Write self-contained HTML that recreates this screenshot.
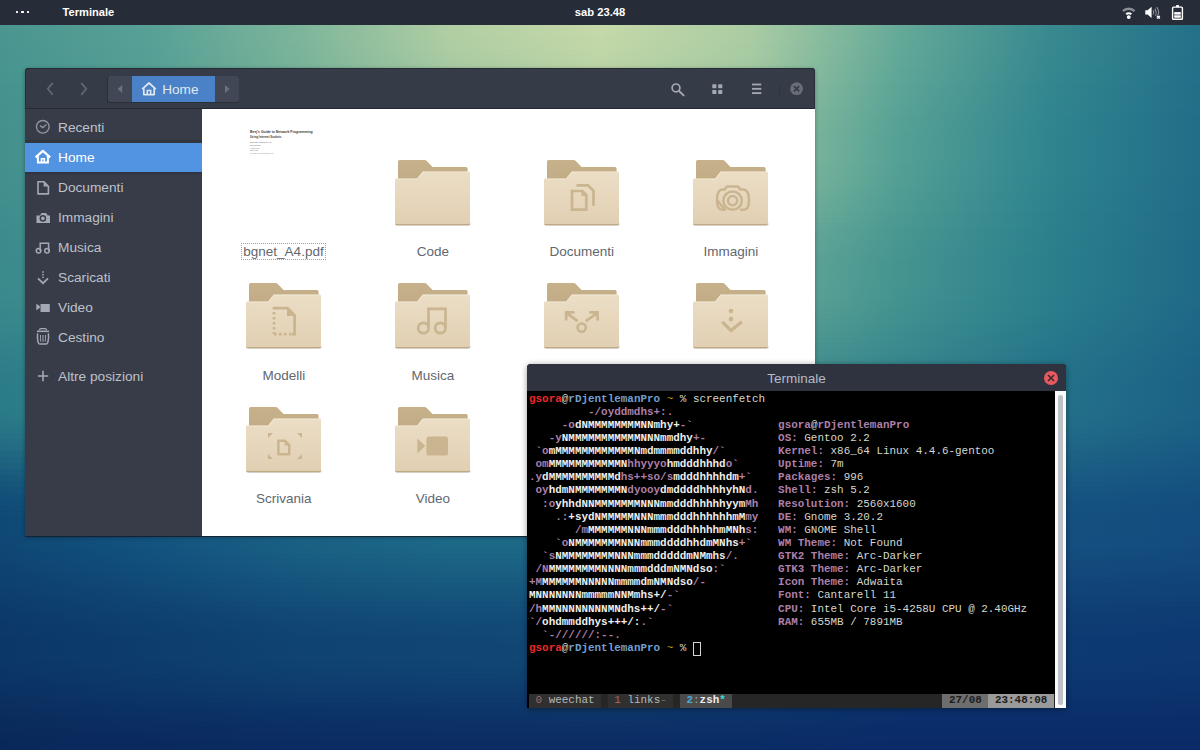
<!DOCTYPE html>
<html><head><meta charset="utf-8"><style>
html,body{margin:0;padding:0}
body{width:1200px;height:750px;overflow:hidden;position:relative;font-family:"Liberation Sans",sans-serif;background:#1a5a80}
.abs{position:absolute}
.bgb{position:absolute;left:0;width:1200px}
#topbar{position:absolute;left:0;top:0;width:1200px;height:25px;background:#262c38;color:#fff;font-weight:bold;font-size:11px}
#topbar .t{position:absolute;top:0;line-height:25px;white-space:nowrap}

/* nautilus */
#naut{position:absolute;left:25px;top:68px;width:790px;height:468px;background:#353945;border-radius:4px 4px 0 0;box-shadow:0 1px 4px rgba(0,0,0,0.35)}
#hb{position:absolute;left:0;top:0;width:790px;height:40px;background:#353a47;border-bottom:1px solid #23262e}
#side{position:absolute;left:0;top:41px;width:177px;height:427px;background:#383d49}
#view{position:absolute;left:177px;top:41px;width:613px;height:427px;background:#fff}
.si{position:absolute;left:33px;font-size:13.3px;color:#bcc2cc;white-space:nowrap}
.lbl{position:absolute;font-size:13.3px;color:#5c616c;white-space:nowrap;text-align:center;width:140px}

/* terminal */
#term{position:absolute;left:527px;top:364px;width:539px;height:344px;background:#000;border-radius:4px 4px 0 0;overflow:hidden;box-shadow:0 1px 6px rgba(0,0,0,0.4)}
#tt{position:absolute;left:0;top:0;width:539px;height:27px;background:#2f3340;color:#b5bac5;font-size:13.5px}
.ttl{position:absolute;left:0;width:539px;text-align:center;top:6.5px;line-height:16px}
#tc{position:absolute;left:2px;top:28.6px;width:527px;height:316px;font-family:"Liberation Mono",monospace;font-size:10.936px;font-weight:bold}
.tr{position:absolute;left:0;height:13.125px;line-height:13.125px;white-space:pre}
.n{font-weight:normal}
#sb{position:absolute;left:0;top:301.9px;width:527px;height:13.125px;background:#262626}
.seg{position:absolute;top:0;height:13.125px;line-height:13.125px;white-space:pre;font-weight:normal}
.tx{position:absolute;white-space:nowrap}

</style></head><body>
<div class="bgb" style="top:25px;height:6px;background:linear-gradient(90deg,#4a958f 0px,#57a096 150px,#7db59a 300px,#b0cea3 450px,#c5d8a8 600px,#aacca3 750px,#64a998 900px,#38898f 1050px,#237089 1200px)"></div>
<div class="bgb" style="top:31px;height:6px;background:linear-gradient(90deg,#4a958f 0px,#57a096 150px,#7db59a 300px,#b0cea3 450px,#c4d8a8 600px,#aacca3 750px,#64a998 900px,#38898f 1050px,#237089 1200px)"></div>
<div class="bgb" style="top:37px;height:6px;background:linear-gradient(90deg,#4a958f 0px,#57a096 150px,#7cb59a 300px,#afcda3 450px,#c3d7a8 600px,#a9cca3 750px,#63a998 900px,#38898f 1050px,#237089 1200px)"></div>
<div class="bgb" style="top:43px;height:6px;background:linear-gradient(90deg,#49958f 0px,#56a096 150px,#7cb49a 300px,#aecda3 450px,#c2d7a7 600px,#a8cba3 750px,#63a898 900px,#37898f 1050px,#237089 1200px)"></div>
<div class="bgb" style="top:49px;height:6px;background:linear-gradient(90deg,#49948f 0px,#569f96 150px,#7bb49a 300px,#accca2 450px,#c0d6a7 600px,#a7cba3 750px,#62a898 900px,#37888f 1050px,#237089 1200px)"></div>
<div class="bgb" style="top:55px;height:6px;background:linear-gradient(90deg,#49948f 0px,#559f95 150px,#7ab399 300px,#aacba2 450px,#bed5a7 600px,#a6caa2 750px,#61a797 900px,#36888f 1050px,#236f89 1200px)"></div>
<div class="bgb" style="top:61px;height:6px;background:linear-gradient(90deg,#48948f 0px,#559f95 150px,#79b399 300px,#a8caa2 450px,#bcd4a6 600px,#a4c9a2 750px,#60a797 900px,#36888f 1050px,#236f89 1200px)"></div>
<div class="bgb" style="top:67px;height:6px;background:linear-gradient(90deg,#48948f 0px,#549e95 150px,#77b299 300px,#a6c9a1 450px,#bad3a6 600px,#a3c9a2 750px,#5fa697 900px,#35888f 1050px,#226f89 1200px)"></div>
<div class="bgb" style="top:73px;height:6px;background:linear-gradient(90deg,#47938f 0px,#549e95 150px,#76b199 300px,#a4c8a1 450px,#b7d2a5 600px,#a1c8a2 750px,#5ea697 900px,#35878f 1050px,#226f89 1200px)"></div>
<div class="bgb" style="top:79px;height:6px;background:linear-gradient(90deg,#47938f 0px,#539d95 150px,#75b199 300px,#a2c7a0 450px,#b5d1a5 600px,#a0c7a1 750px,#5da597 900px,#34878f 1050px,#226f89 1200px)"></div>
<div class="bgb" style="top:85px;height:6px;background:linear-gradient(90deg,#46928e 0px,#529d94 150px,#73b098 300px,#9fc6a0 450px,#b2cfa4 600px,#9ec6a1 750px,#5ca496 900px,#33868f 1050px,#226e88 1200px)"></div>
<div class="bgb" style="top:91px;height:6px;background:linear-gradient(90deg,#46928e 0px,#529d94 150px,#72af98 300px,#9dc5a0 450px,#afcea3 600px,#9cc6a1 750px,#5ba496 900px,#33868f 1050px,#226e88 1200px)"></div>
<div class="bgb" style="top:97px;height:6px;background:linear-gradient(90deg,#45928e 0px,#519c94 150px,#71af98 300px,#9bc49f 450px,#accda3 600px,#9ac5a0 750px,#5aa396 900px,#32868f 1050px,#226e88 1200px)"></div>
<div class="bgb" style="top:103px;height:6px;background:linear-gradient(90deg,#45918e 0px,#519c94 150px,#6fae98 300px,#98c39f 450px,#aacca2 600px,#99c4a0 750px,#59a396 900px,#32858f 1050px,#226e88 1200px)"></div>
<div class="bgb" style="top:109px;height:6px;background:linear-gradient(90deg,#45918e 0px,#509b94 150px,#6ead98 300px,#96c29e 450px,#a7cba2 600px,#97c3a0 750px,#58a296 900px,#31858f 1050px,#216e88 1200px)"></div>
<div class="bgb" style="top:115px;height:6px;background:linear-gradient(90deg,#44918e 0px,#4f9b93 150px,#6dad97 300px,#94c19e 450px,#a5caa1 600px,#96c3a0 750px,#57a195 900px,#30858f 1050px,#216d88 1200px)"></div>
<div class="bgb" style="top:121px;height:6px;background:linear-gradient(90deg,#44918e 0px,#4f9b93 150px,#6cac97 300px,#93c09e 450px,#a3c9a1 600px,#95c29f 750px,#56a195 900px,#30858f 1050px,#216d88 1200px)"></div>
<div class="bgb" style="top:127px;height:6px;background:linear-gradient(90deg,#43908e 0px,#4f9a93 150px,#6bac97 300px,#91bf9d 450px,#a2c8a1 600px,#94c29f 750px,#55a195 900px,#30848f 1050px,#216d88 1200px)"></div>
<div class="bgb" style="top:133px;height:6px;background:linear-gradient(90deg,#43908e 0px,#4e9a93 150px,#6bab97 300px,#90bf9d 450px,#a0c8a0 600px,#93c19f 750px,#55a095 900px,#2f848f 1050px,#216d88 1200px)"></div>
<div class="bgb" style="top:139px;height:6px;background:linear-gradient(90deg,#43908e 0px,#4e9a93 150px,#6aab97 300px,#8fbe9d 450px,#9fc7a0 600px,#92c19f 750px,#54a095 900px,#2f848f 1050px,#216d88 1200px)"></div>
<div class="bgb" style="top:145px;height:6px;background:linear-gradient(90deg,#43908e 0px,#4e9a93 150px,#6aab97 300px,#8fbe9d 450px,#9fc7a0 600px,#92c19f 750px,#54a095 900px,#2f848f 1050px,#216d88 1200px)"></div>
<div class="bgb" style="top:151px;height:6px;background:linear-gradient(90deg,#43908e 0px,#4e9a93 150px,#6aab97 300px,#8fbe9d 450px,#9fc7a0 600px,#92c19f 750px,#54a095 900px,#2f848f 1050px,#216d88 1200px)"></div>
<div class="bgb" style="top:157px;height:6px;background:linear-gradient(90deg,#43908e 0px,#4e9a93 150px,#6aab97 300px,#8ebe9d 450px,#9ec7a0 600px,#91c19f 750px,#54a095 900px,#2f848f 1050px,#216d88 1200px)"></div>
<div class="bgb" style="top:163px;height:6px;background:linear-gradient(90deg,#43908e 0px,#4e9a93 150px,#69aa97 300px,#8dbd9d 450px,#9dc6a0 600px,#90c09f 750px,#539f95 900px,#2f848f 1050px,#216d88 1200px)"></div>
<div class="bgb" style="top:169px;height:6px;background:linear-gradient(90deg,#42908e 0px,#4d9993 150px,#68aa97 300px,#8cbc9c 450px,#9bc59f 600px,#8fbf9e 750px,#539f95 900px,#2f848f 1050px,#216d88 1200px)"></div>
<div class="bgb" style="top:175px;height:6px;background:linear-gradient(90deg,#428f8e 0px,#4d9993 150px,#67a996 300px,#8abb9c 450px,#99c49f 600px,#8dbe9e 750px,#529e94 900px,#2e838f 1050px,#216d88 1200px)"></div>
<div class="bgb" style="top:181px;height:6px;background:linear-gradient(90deg,#428f8e 0px,#4c9992 150px,#66a896 300px,#88ba9c 450px,#96c29e 600px,#8bbd9e 750px,#519e94 900px,#2e838e 1050px,#216c88 1200px)"></div>
<div class="bgb" style="top:187px;height:6px;background:linear-gradient(90deg,#418f8e 0px,#4c9892 150px,#65a896 300px,#86b99b 450px,#93c09e 600px,#89bc9d 750px,#509d94 900px,#2e838e 1050px,#216c88 1200px)"></div>
<div class="bgb" style="top:193px;height:6px;background:linear-gradient(90deg,#418e8d 0px,#4b9892 150px,#64a796 300px,#83b79b 450px,#90bf9d 600px,#86ba9d 750px,#4f9c93 900px,#2e828e 1050px,#206c88 1200px)"></div>
<div class="bgb" style="top:199px;height:6px;background:linear-gradient(90deg,#408e8d 0px,#4a9792 150px,#62a695 300px,#80b69a 450px,#8dbd9d 600px,#84b99c 750px,#4e9b93 900px,#2d828e 1050px,#206c88 1200px)"></div>
<div class="bgb" style="top:205px;height:6px;background:linear-gradient(90deg,#3f8d8d 0px,#4a9692 150px,#61a595 300px,#7eb49a 450px,#8abb9c 600px,#81b79c 750px,#4d9b93 900px,#2d828e 1050px,#206c88 1200px)"></div>
<div class="bgb" style="top:211px;height:6px;background:linear-gradient(90deg,#3f8d8d 0px,#499691 150px,#5fa495 300px,#7bb399 450px,#86b99b 600px,#7eb69b 750px,#4c9a92 900px,#2d818d 1050px,#206b87 1200px)"></div>
<div class="bgb" style="top:217px;height:6px;background:linear-gradient(90deg,#3e8c8d 0px,#489591 150px,#5ea395 300px,#78b199 450px,#83b79b 600px,#7cb49b 750px,#4b9992 900px,#2d818d 1050px,#206b87 1200px)"></div>
<div class="bgb" style="top:223px;height:6px;background:linear-gradient(90deg,#3e8c8d 0px,#479591 150px,#5ca294 300px,#75af98 450px,#7fb59a 600px,#79b29a 750px,#499892 900px,#2c818d 1050px,#206b87 1200px)"></div>
<div class="bgb" style="top:229px;height:6px;background:linear-gradient(90deg,#3d8c8d 0px,#479491 150px,#5ba194 300px,#73ae98 450px,#7cb399 600px,#76b19a 750px,#489791 900px,#2c808d 1050px,#206b87 1200px)"></div>
<div class="bgb" style="top:235px;height:6px;background:linear-gradient(90deg,#3d8b8c 0px,#469491 150px,#59a094 300px,#70ad97 450px,#79b299 600px,#74b099 750px,#479791 900px,#2c808d 1050px,#1f6b87 1200px)"></div>
<div class="bgb" style="top:241px;height:6px;background:linear-gradient(90deg,#3c8b8c 0px,#469390 150px,#589f94 300px,#6eab97 450px,#76b098 600px,#72ae99 750px,#469691 900px,#2c808c 1050px,#1f6a87 1200px)"></div>
<div class="bgb" style="top:247px;height:6px;background:linear-gradient(90deg,#3c8b8c 0px,#459390 150px,#579e93 300px,#6caa97 450px,#74af98 600px,#70ad99 750px,#469591 900px,#2b808c 1050px,#1f6a87 1200px)"></div>
<div class="bgb" style="top:253px;height:6px;background:linear-gradient(90deg,#3b8a8c 0px,#459290 150px,#569e93 300px,#6aa996 450px,#72ae98 600px,#6eac98 750px,#459590 900px,#2b7f8c 1050px,#1f6a87 1200px)"></div>
<div class="bgb" style="top:259px;height:6px;background:linear-gradient(90deg,#3b8a8c 0px,#449290 150px,#569d93 300px,#69a996 450px,#70ad97 600px,#6dac98 750px,#449490 900px,#2b7f8c 1050px,#1f6a87 1200px)"></div>
<div class="bgb" style="top:265px;height:6px;background:linear-gradient(90deg,#3b8a8c 0px,#449290 150px,#559d93 300px,#68a896 450px,#6fac97 600px,#6cab98 750px,#449490 900px,#2b7f8c 1050px,#1f6a87 1200px)"></div>
<div class="bgb" style="top:271px;height:6px;background:linear-gradient(90deg,#3b8a8c 0px,#449290 150px,#559d93 300px,#68a896 450px,#6fac97 600px,#6cab98 750px,#449490 900px,#2b7f8c 1050px,#1f6a87 1200px)"></div>
<div class="bgb" style="top:277px;height:6px;background:linear-gradient(90deg,#3b8a8c 0px,#449290 150px,#559d93 300px,#68a896 450px,#6fac97 600px,#6cab98 750px,#449490 900px,#2b7f8c 1050px,#1f6a87 1200px)"></div>
<div class="bgb" style="top:283px;height:6px;background:linear-gradient(90deg,#3b8a8c 0px,#449290 150px,#549d93 300px,#67a796 450px,#6eab97 600px,#6baa98 750px,#449490 900px,#2b7f8c 1050px,#1f6a87 1200px)"></div>
<div class="bgb" style="top:289px;height:6px;background:linear-gradient(90deg,#3a898c 0px,#439190 150px,#549c93 300px,#66a796 450px,#6daa96 600px,#6aaa97 750px,#439390 900px,#2b7e8c 1050px,#1f6a87 1200px)"></div>
<div class="bgb" style="top:295px;height:6px;background:linear-gradient(90deg,#3a898c 0px,#42908f 150px,#539b92 300px,#64a595 450px,#6ba996 600px,#69a997 750px,#429390 900px,#2a7e8c 1050px,#1f6987 1200px)"></div>
<div class="bgb" style="top:301px;height:6px;background:linear-gradient(90deg,#39888c 0px,#41908f 150px,#519a92 300px,#62a495 450px,#68a796 600px,#67a797 750px,#42928f 900px,#2a7d8c 1050px,#1e6987 1200px)"></div>
<div class="bgb" style="top:307px;height:6px;background:linear-gradient(90deg,#38878b 0px,#408f8f 150px,#509992 300px,#60a294 450px,#66a695 600px,#65a696 750px,#41918f 900px,#2a7d8c 1050px,#1e6887 1200px)"></div>
<div class="bgb" style="top:313px;height:6px;background:linear-gradient(90deg,#37868b 0px,#3f8d8e 150px,#4e9891 300px,#5ea194 450px,#63a494 600px,#62a495 750px,#40908f 900px,#297c8b 1050px,#1e6887 1200px)"></div>
<div class="bgb" style="top:319px;height:6px;background:linear-gradient(90deg,#36868b 0px,#3e8c8e 150px,#4c9691 300px,#5b9f93 450px,#60a294 600px,#60a295 750px,#3f8f8f 900px,#297b8b 1050px,#1e6787 1200px)"></div>
<div class="bgb" style="top:325px;height:6px;background:linear-gradient(90deg,#35858b 0px,#3c8b8e 150px,#4b9590 300px,#589d93 450px,#5c9f93 600px,#5da194 750px,#3d8e8e 900px,#287a8b 1050px,#1d6787 1200px)"></div>
<div class="bgb" style="top:331px;height:6px;background:linear-gradient(90deg,#34848b 0px,#3b8a8d 150px,#499390 300px,#559b92 450px,#599d92 600px,#5b9f93 750px,#3c8d8e 900px,#28798b 1050px,#1d6687 1200px)"></div>
<div class="bgb" style="top:337px;height:6px;background:linear-gradient(90deg,#33838a 0px,#39888d 150px,#47928f 300px,#529991 450px,#569b92 600px,#589d93 750px,#3b8c8e 900px,#27788b 1050px,#1d6686 1200px)"></div>
<div class="bgb" style="top:343px;height:6px;background:linear-gradient(90deg,#31828a 0px,#38878c 150px,#45908f 300px,#4f9791 450px,#529891 600px,#559b92 750px,#3a8a8e 900px,#27778b 1050px,#1d6586 1200px)"></div>
<div class="bgb" style="top:349px;height:6px;background:linear-gradient(90deg,#30818a 0px,#37868c 150px,#438f8e 300px,#4c9590 450px,#4f9690 600px,#539991 750px,#39898d 900px,#26768b 1050px,#1c6586 1200px)"></div>
<div class="bgb" style="top:355px;height:6px;background:linear-gradient(90deg,#2f808a 0px,#35858c 150px,#418e8e 300px,#4a938f 450px,#4c9490 600px,#509791 750px,#37888d 900px,#26758b 1050px,#1c6486 1200px)"></div>
<div class="bgb" style="top:361px;height:6px;background:linear-gradient(90deg,#2e7f8a 0px,#34848b 150px,#3f8c8d 300px,#47918f 450px,#49928f 600px,#4e9590 750px,#36878d 900px,#25758a 1050px,#1c6486 1200px)"></div>
<div class="bgb" style="top:367px;height:6px;background:linear-gradient(90deg,#2d7e89 0px,#33838b 150px,#3e8b8d 300px,#458f8e 450px,#46908e 600px,#4c948f 750px,#35868d 900px,#25748a 1050px,#1c6386 1200px)"></div>
<div class="bgb" style="top:373px;height:6px;background:linear-gradient(90deg,#2d7d89 0px,#32828b 150px,#3d8a8d 300px,#438e8e 450px,#448e8e 600px,#4a938f 750px,#35868c 900px,#25738a 1050px,#1b6386 1200px)"></div>
<div class="bgb" style="top:379px;height:6px;background:linear-gradient(90deg,#2c7d89 0px,#31818a 150px,#3c898c 300px,#418d8e 450px,#428d8e 600px,#48928f 750px,#34858c 900px,#24738a 1050px,#1b6286 1200px)"></div>
<div class="bgb" style="top:385px;height:6px;background:linear-gradient(90deg,#2b7c89 0px,#31808a 150px,#3b898c 300px,#408c8d 450px,#408c8d 600px,#47918e 750px,#33848c 900px,#24728a 1050px,#1b6286 1200px)"></div>
<div class="bgb" style="top:391px;height:6px;background:linear-gradient(90deg,#2b7c89 0px,#30808a 150px,#3a888c 300px,#3f8b8d 450px,#3f8b8d 600px,#46908e 750px,#33848c 900px,#24728a 1050px,#1b6286 1200px)"></div>
<div class="bgb" style="top:397px;height:6px;background:linear-gradient(90deg,#2b7c89 0px,#30808a 150px,#3a888c 300px,#3f8b8d 450px,#3f8b8d 600px,#46908e 750px,#33848c 900px,#24728a 1050px,#1b6286 1200px)"></div>
<div class="bgb" style="top:403px;height:6px;background:linear-gradient(90deg,#2b7c89 0px,#30808a 150px,#3a888c 300px,#3f8b8d 450px,#3f8b8d 600px,#46908e 750px,#33848c 900px,#24728a 1050px,#1b6286 1200px)"></div>
<div class="bgb" style="top:409px;height:6px;background:linear-gradient(90deg,#2a7b88 0px,#2f7f8a 150px,#39878c 300px,#3e8a8d 450px,#3e8a8d 600px,#458f8e 750px,#32838c 900px,#24718a 1050px,#1b6186 1200px)"></div>
<div class="bgb" style="top:415px;height:6px;background:linear-gradient(90deg,#297988 0px,#2e7e89 150px,#38868c 300px,#3d898d 450px,#3d898d 600px,#448e8d 750px,#31818b 900px,#237089 1050px,#1b6186 1200px)"></div>
<div class="bgb" style="top:421px;height:6px;background:linear-gradient(90deg,#287787 0px,#2d7c89 150px,#37848b 300px,#3c888d 450px,#3c888d 600px,#428c8d 750px,#307f8b 900px,#236f89 1050px,#1a6085 1200px)"></div>
<div class="bgb" style="top:427px;height:6px;background:linear-gradient(90deg,#277486 0px,#2c7a89 150px,#35828b 300px,#3a868c 450px,#3a868c 600px,#408a8d 750px,#2f7d8a 900px,#226d89 1050px,#1a5f85 1200px)"></div>
<div class="bgb" style="top:433px;height:6px;background:linear-gradient(90deg,#257285 0px,#2a7788 150px,#34808b 300px,#38848c 450px,#38848c 600px,#3e878c 750px,#2d7a89 900px,#216b88 1050px,#195e84 1200px)"></div>
<div class="bgb" style="top:439px;height:6px;background:linear-gradient(90deg,#246e84 0px,#287487 150px,#327e8a 300px,#36828c 450px,#36828c 600px,#3b858c 750px,#2b7788 900px,#206987 1050px,#195c84 1200px)"></div>
<div class="bgb" style="top:445px;height:6px;background:linear-gradient(90deg,#226b82 0px,#267287 150px,#2f7b8a 300px,#34808b 450px,#34808b 600px,#38828b 750px,#297487 900px,#1f6787 1050px,#185b83 1200px)"></div>
<div class="bgb" style="top:451px;height:6px;background:linear-gradient(90deg,#206781 0px,#246e86 150px,#2d7989 300px,#317e8b 450px,#317e8b 600px,#357f8a 750px,#277086 900px,#1e6486 1050px,#185983 1200px)"></div>
<div class="bgb" style="top:457px;height:6px;background:linear-gradient(90deg,#1e6480 0px,#226b85 150px,#2b7689 300px,#2f7b8b 450px,#2f7b8b 600px,#327c8a 750px,#256c85 900px,#1d6285 1050px,#175882 1200px)"></div>
<div class="bgb" style="top:463px;height:6px;background:linear-gradient(90deg,#1c607e 0px,#206885 150px,#297388 300px,#2d798a 450px,#2d798a 600px,#2f7989 750px,#236984 900px,#1c6085 1050px,#175682 1200px)"></div>
<div class="bgb" style="top:469px;height:6px;background:linear-gradient(90deg,#1a5c7d 0px,#1e6584 150px,#267188 300px,#2a778a 450px,#2a778a 600px,#2c7688 750px,#216583 900px,#1b5d84 1050px,#165581 1200px)"></div>
<div class="bgb" style="top:475px;height:6px;background:linear-gradient(90deg,#18597b 0px,#1c6283 150px,#246e87 300px,#28748a 450px,#28748a 600px,#297388 750px,#1f6282 900px,#1a5b83 1050px,#165381 1200px)"></div>
<div class="bgb" style="top:481px;height:6px;background:linear-gradient(90deg,#16557a 0px,#1a5f83 150px,#226c87 300px,#267289 450px,#267289 600px,#277087 750px,#1d5f82 900px,#195983 1050px,#155280 1200px)"></div>
<div class="bgb" style="top:487px;height:6px;background:linear-gradient(90deg,#145279 0px,#195c82 150px,#206986 300px,#247089 450px,#247089 600px,#246d87 750px,#1c5c81 900px,#185782 1050px,#155080 1200px)"></div>
<div class="bgb" style="top:493px;height:6px;background:linear-gradient(90deg,#134f78 0px,#175a81 150px,#1e6786 300px,#226f89 450px,#226f89 600px,#226b86 750px,#1a5980 900px,#175581 1050px,#144f7f 1200px)"></div>
<div class="bgb" style="top:499px;height:6px;background:linear-gradient(90deg,#114d77 0px,#165881 150px,#1d6586 300px,#206d88 450px,#206d88 600px,#206986 750px,#19567f 900px,#165381 1050px,#144e7f 1200px)"></div>
<div class="bgb" style="top:505px;height:6px;background:linear-gradient(90deg,#104b76 0px,#145681 150px,#1c6485 300px,#1f6c88 450px,#1f6c88 600px,#1e6785 750px,#17557f 900px,#165281 1050px,#134d7e 1200px)"></div>
<div class="bgb" style="top:511px;height:6px;background:linear-gradient(90deg,#104975 0px,#145580 150px,#1b6385 300px,#1e6b88 450px,#1e6b88 600px,#1d6685 750px,#17537e 900px,#155180 1050px,#134c7e 1200px)"></div>
<div class="bgb" style="top:517px;height:6px;background:linear-gradient(90deg,#0f4875 0px,#135480 150px,#1a6285 300px,#1d6a88 450px,#1d6a88 600px,#1c6585 750px,#16527e 900px,#155080 1050px,#134c7e 1200px)"></div>
<div class="bgb" style="top:523px;height:6px;background:linear-gradient(90deg,#0f4875 0px,#135480 150px,#1a6285 300px,#1d6a88 450px,#1d6a88 600px,#1c6585 750px,#16527e 900px,#155080 1050px,#134c7e 1200px)"></div>
<div class="bgb" style="top:529px;height:6px;background:linear-gradient(90deg,#0f4875 0px,#135480 150px,#1a6285 300px,#1d6a88 450px,#1d6a88 600px,#1c6585 750px,#16527e 900px,#155080 1050px,#134c7e 1200px)"></div>
<div class="bgb" style="top:535px;height:6px;background:linear-gradient(90deg,#0f4775 0px,#13537f 150px,#1a6184 300px,#1d6987 450px,#1d6987 600px,#1c6484 750px,#16517e 900px,#154f80 1050px,#134b7e 1200px)"></div>
<div class="bgb" style="top:541px;height:6px;background:linear-gradient(90deg,#0f4774 0px,#13537f 150px,#196084 300px,#1c6887 450px,#1c6887 600px,#1b6384 750px,#16517d 900px,#154f7f 1050px,#134b7d 1200px)"></div>
<div class="bgb" style="top:547px;height:6px;background:linear-gradient(90deg,#0f4673 0px,#12527e 150px,#195f83 300px,#1c6686 450px,#1c6686 600px,#1b6283 750px,#15507d 900px,#144e7f 1050px,#124a7d 1200px)"></div>
<div class="bgb" style="top:553px;height:6px;background:linear-gradient(90deg,#0e4573 0px,#12507d 150px,#185d82 300px,#1b6485 450px,#1b6585 600px,#1a6082 750px,#154e7c 900px,#144d7e 1050px,#12497c 1200px)"></div>
<div class="bgb" style="top:559px;height:6px;background:linear-gradient(90deg,#0e4472 0px,#124f7c 150px,#185b81 300px,#1a6284 450px,#1a6384 600px,#195e81 750px,#144d7b 900px,#134b7d 1050px,#12487b 1200px)"></div>
<div class="bgb" style="top:565px;height:6px;background:linear-gradient(90deg,#0e4371 0px,#114e7b 150px,#175a80 300px,#196083 450px,#1a6183 600px,#195c80 750px,#144c7b 900px,#134a7c 1050px,#11477a 1200px)"></div>
<div class="bgb" style="top:571px;height:6px;background:linear-gradient(90deg,#0e4270 0px,#114c79 150px,#16577f 300px,#195d81 450px,#195e81 600px,#185a7f 750px,#134a7a 900px,#12497b 1050px,#11457a 1200px)"></div>
<div class="bgb" style="top:577px;height:6px;background:linear-gradient(90deg,#0d416f 0px,#114b78 150px,#15557d 300px,#185b80 450px,#185c80 600px,#17587e 750px,#134979 900px,#12477a 1050px,#114479 1200px)"></div>
<div class="bgb" style="top:583px;height:6px;background:linear-gradient(90deg,#0d406e 0px,#104976 150px,#15537c 300px,#17587e 450px,#175a7e 600px,#16567d 750px,#124778 900px,#114579 1050px,#104278 1200px)"></div>
<div class="bgb" style="top:589px;height:6px;background:linear-gradient(90deg,#0d3f6d 0px,#104775 150px,#14517a 300px,#16567d 450px,#16577d 600px,#15537c 750px,#124577 900px,#114478 1050px,#104177 1200px)"></div>
<div class="bgb" style="top:595px;height:6px;background:linear-gradient(90deg,#0d3d6c 0px,#0f4674 150px,#134f79 300px,#15537c 450px,#16557c 600px,#15517a 750px,#114477 900px,#104277 1050px,#0f4076 1200px)"></div>
<div class="bgb" style="top:601px;height:6px;background:linear-gradient(90deg,#0c3c6b 0px,#0f4472 150px,#124d78 300px,#14507a 450px,#15527a 600px,#144f79 750px,#104276 900px,#0f4176 1050px,#0f3e75 1200px)"></div>
<div class="bgb" style="top:607px;height:6px;background:linear-gradient(90deg,#0c3b6a 0px,#0e4371 150px,#124a77 300px,#134e79 450px,#145079 600px,#134d78 750px,#104175 900px,#0f3f75 1050px,#0e3d74 1200px)"></div>
<div class="bgb" style="top:613px;height:6px;background:linear-gradient(90deg,#0c3a69 0px,#0e4170 150px,#114975 300px,#124c78 450px,#134e78 600px,#124b77 750px,#0f3f74 900px,#0e3e75 1050px,#0e3c73 1200px)"></div>
<div class="bgb" style="top:619px;height:6px;background:linear-gradient(90deg,#0c3968 0px,#0e406f 150px,#104774 300px,#124a77 450px,#134c77 600px,#124976 750px,#0f3e74 900px,#0e3d74 1050px,#0e3b73 1200px)"></div>
<div class="bgb" style="top:625px;height:6px;background:linear-gradient(90deg,#0b3867 0px,#0d3f6e 150px,#104674 300px,#114876 450px,#124b76 600px,#114875 750px,#0f3d73 900px,#0e3c73 1050px,#0d3a72 1200px)"></div>
<div class="bgb" style="top:631px;height:6px;background:linear-gradient(90deg,#0b3867 0px,#0d3e6d 150px,#0f4473 300px,#114775 450px,#124a75 600px,#114675 750px,#0e3c73 900px,#0d3b73 1050px,#0d3972 1200px)"></div>
<div class="bgb" style="top:637px;height:6px;background:linear-gradient(90deg,#0b3766 0px,#0d3d6c 150px,#0f4472 300px,#104674 450px,#114974 600px,#104674 750px,#0e3b72 900px,#0d3a72 1050px,#0d3871 1200px)"></div>
<div class="bgb" style="top:643px;height:6px;background:linear-gradient(90deg,#0b3766 0px,#0d3d6c 150px,#0f4372 300px,#104574 450px,#114874 600px,#104574 750px,#0e3b72 900px,#0d3a72 1050px,#0d3871 1200px)"></div>
<div class="bgb" style="top:649px;height:6px;background:linear-gradient(90deg,#0b3766 0px,#0d3d6c 150px,#0f4372 300px,#104574 450px,#114874 600px,#104574 750px,#0e3b72 900px,#0d3a72 1050px,#0d3871 1200px)"></div>
<div class="bgb" style="top:655px;height:6px;background:linear-gradient(90deg,#0b3766 0px,#0d3d6c 150px,#0f4372 300px,#104574 450px,#114874 600px,#104574 750px,#0e3b72 900px,#0d3a72 1050px,#0d3871 1200px)"></div>
<div class="bgb" style="top:661px;height:6px;background:linear-gradient(90deg,#0b3665 0px,#0d3c6b 150px,#0f4271 300px,#104473 450px,#114773 600px,#104473 750px,#0e3a71 900px,#0d3971 1050px,#0d3771 1200px)"></div>
<div class="bgb" style="top:667px;height:6px;background:linear-gradient(90deg,#0b3565 0px,#0d3b6b 150px,#0e4170 300px,#0f4372 450px,#104572 600px,#0f4373 750px,#0e3971 900px,#0d3871 1050px,#0d3770 1200px)"></div>
<div class="bgb" style="top:673px;height:6px;background:linear-gradient(90deg,#0b3464 0px,#0c3a6a 150px,#0e3f6f 300px,#0f4171 450px,#104371 600px,#0f4172 750px,#0d3870 900px,#0c3770 1050px,#0c366f 1200px)"></div>
<div class="bgb" style="top:679px;height:6px;background:linear-gradient(90deg,#0b3363 0px,#0c3869 150px,#0e3d6e 300px,#0f3f70 450px,#104170 600px,#0f3f71 750px,#0d3770 900px,#0c3670 1050px,#0c356f 1200px)"></div>
<div class="bgb" style="top:685px;height:6px;background:linear-gradient(90deg,#0a3262 0px,#0c3767 150px,#0d3c6d 300px,#0e3d6f 450px,#0f3f6f 600px,#0e3d6f 750px,#0d366f 900px,#0c356f 1050px,#0c346e 1200px)"></div>
<div class="bgb" style="top:691px;height:6px;background:linear-gradient(90deg,#0a3161 0px,#0c3566 150px,#0d3a6b 300px,#0e3b6d 450px,#0f3d6d 600px,#0e3b6e 750px,#0c346e 900px,#0c346e 1050px,#0c336d 1200px)"></div>
<div class="bgb" style="top:697px;height:6px;background:linear-gradient(90deg,#0a3060 0px,#0c3465 150px,#0c386a 300px,#0e396c 450px,#0e3a6c 600px,#0e396d 750px,#0c336d 900px,#0c326d 1050px,#0c326c 1200px)"></div>
<div class="bgb" style="top:703px;height:6px;background:linear-gradient(90deg,#0a2e5f 0px,#0b3264 150px,#0c3569 300px,#0d376b 450px,#0d386b 600px,#0d376c 750px,#0c326c 900px,#0b316c 1050px,#0b306c 1200px)"></div>
<div class="bgb" style="top:709px;height:6px;background:linear-gradient(90deg,#0a2d5e 0px,#0b3063 150px,#0c3367 300px,#0d3569 450px,#0d3669 600px,#0d356b 750px,#0b306b 900px,#0b306b 1050px,#0b2f6b 1200px)"></div>
<div class="bgb" style="top:715px;height:6px;background:linear-gradient(90deg,#092c5d 0px,#0b2f61 150px,#0b3266 300px,#0c3368 450px,#0c3468 600px,#0c3369 750px,#0b2f6a 900px,#0b2f6a 1050px,#0b2e6a 1200px)"></div>
<div class="bgb" style="top:721px;height:6px;background:linear-gradient(90deg,#092b5c 0px,#0b2d60 150px,#0b3065 300px,#0c3167 450px,#0c3267 600px,#0c3168 750px,#0b2e6a 900px,#0b2e6a 1050px,#0b2d6a 1200px)"></div>
<div class="bgb" style="top:727px;height:6px;background:linear-gradient(90deg,#092a5b 0px,#0a2c5f 150px,#0b2e64 300px,#0c2f66 450px,#0c3066 600px,#0c2f67 750px,#0a2d69 900px,#0a2d69 1050px,#0a2c69 1200px)"></div>
<div class="bgb" style="top:733px;height:6px;background:linear-gradient(90deg,#09295b 0px,#0a2b5f 150px,#0a2d63 300px,#0b2e65 450px,#0b2e65 600px,#0b2e67 750px,#0a2c69 900px,#0a2c69 1050px,#0a2c68 1200px)"></div>
<div class="bgb" style="top:739px;height:6px;background:linear-gradient(90deg,#09285a 0px,#0a2a5e 150px,#0a2c62 300px,#0b2d64 450px,#0b2d64 600px,#0b2d66 750px,#0a2b68 900px,#0a2b68 1050px,#0a2b68 1200px)"></div>
<div class="bgb" style="top:745px;height:6px;background:linear-gradient(90deg,#09285a 0px,#0a2a5e 150px,#0a2c62 300px,#0b2d64 450px,#0b2d64 600px,#0b2d66 750px,#0a2b68 900px,#0a2b68 1050px,#0a2b68 1200px)"></div>
<div id="topbar"></div>
<div class="abs" style="left:15.9px;top:10.8px;width:2.2px;height:2.2px;background:#fff;border-radius:0.5px"></div>
<div class="abs" style="left:21.4px;top:10.8px;width:2.2px;height:2.2px;background:#fff;border-radius:0.5px"></div>
<div class="abs" style="left:26.9px;top:10.8px;width:2.2px;height:2.2px;background:#fff;border-radius:0.5px"></div>
<div class="tx" style="left:62.60px;top:6.05px;font-size:11.10px;line-height:12.40px;color:#fff;font-weight:bold;">Terminale</div>
<div class="tx" style="left:600.00px;top:5.96px;width:400px;margin-left:-200px;text-align:center;font-size:11.20px;line-height:12.51px;color:#fff;font-weight:bold;">sab 23.48</div>
<svg class="abs" style="left:1118px;top:3px" width="70" height="20" viewBox="0 0 70 20">
 <path d="M4.95 8.1 A8.15 8.15 0 0 1 16.55 8.1" stroke="#8a8e96" stroke-width="2.4" fill="none"/>
 <path d="M8.2 11.3 A3.6 3.6 0 0 1 13.3 11.3" stroke="#fff" stroke-width="2" fill="none"/>
 <circle cx="10.75" cy="14.1" r="1.95" fill="#fff"/>
 <path d="M27.3 7.2 H29.6 L33.6 3.8 V15 L29.6 11.6 H27.3Z" fill="#fff"/>
 <path d="M35.2 7.3 Q36.4 9.4 35.2 11.5" stroke="#8a8e96" stroke-width="1.2" fill="none"/>
 <path d="M37 5.6 Q39 9.4 37.6 13" stroke="#8a8e96" stroke-width="1.2" fill="none"/>
 <path d="M38.8 4 Q41.8 9 39.8 12.6" stroke="#8a8e96" stroke-width="1.2" fill="none"/>
 <path d="M39 13 L41.8 15.6 M41.8 13 L39 15.6" stroke="#fff" stroke-width="1.4"/>
 <rect x="54.6" y="4.1" width="9.8" height="12.1" rx="0.8" stroke="#fff" stroke-width="1.4" fill="none"/>
 <rect x="58.1" y="2.1" width="2.9" height="2" fill="#fff"/>
 <rect x="56.2" y="9.1" width="6.6" height="2.5" fill="#fff"/>
 <rect x="56.2" y="12.3" width="6.6" height="2.4" fill="#fff"/>
</svg>
<div id="naut"></div>
<div class="abs" style="left:25px;top:68px;width:790px;height:40px;background:#363b48;border-radius:4px 4px 0 0;box-shadow:inset 0 1px 0 #272b33,inset 1px 0 0 #2a2e37,inset -1px 0 0 #2a2e37"></div>
<div class="abs" style="left:25px;top:109px;width:1px;height:427px;background:#2a2e37"></div><div class="abs" style="left:25px;top:536px;width:790px;height:1px;background:rgba(20,24,32,0.7)"></div>
<div class="abs" style="left:25px;top:108px;width:790px;height:1px;background:#262a33"></div>
<div class="abs" style="left:25px;top:109px;width:177px;height:427px;background:#383c48"></div>
<div class="abs" style="left:202px;top:109px;width:613px;height:427px;background:#fff"></div>
<svg class="abs" style="left:40px;top:78px" width="56" height="22" viewBox="0 0 56 22">
 <path d="M12.8 4.8 L7.8 10.8 L12.8 16.8" stroke="#5f6571" stroke-width="1.9" fill="none"/>
 <path d="M41.2 4.8 L46.2 10.8 L41.2 16.8" stroke="#5f6571" stroke-width="1.9" fill="none"/>
</svg>
<div class="abs" style="left:107px;top:75.5px;width:132px;height:27px;background:#2a2e37;border-radius:3px"></div>
<div class="abs" style="left:108px;top:76px;width:24px;height:26px;background:#424755;border-radius:2.5px 0 0 2.5px"></div>
<div class="abs" style="left:132px;top:76px;width:83px;height:26px;background:#4b81c6"></div>
<div class="abs" style="left:215px;top:76px;width:23.5px;height:26px;background:#424755;border-radius:0 2.5px 2.5px 0"></div>
<svg class="abs" style="left:108px;top:76px" width="131" height="26" viewBox="0 0 131 26">
 <path d="M14.2 9 L9.6 13 L14.2 17Z" fill="#6b7180"/>
 <path d="M117 9 L121.6 13 L117 17Z" fill="#6b7180"/>
 <path d="M34.2 13.2 L41 7 L47.8 13.2 M35.8 12 V18.6 H46.2 V12" stroke="#dfe7f0" stroke-width="1.7" fill="none" stroke-linejoin="round"/>
 <path d="M39.3 18.6 V14.6 H42.7 V18.6" stroke="#dfe7f0" stroke-width="1.5" fill="none"/>
</svg>
<div class="tx" style="left:162.20px;top:81.59px;font-size:13.60px;line-height:15.19px;color:#e1e9f2;font-weight:normal;">Home</div>
<svg class="abs" style="left:664px;top:76px" width="142" height="26" viewBox="0 0 142 26">
 <circle cx="12" cy="11.9" r="3.9" stroke="#a3a9b3" stroke-width="1.7" fill="none"/>
 <path d="M14.8 14.8 L19.6 19.4" stroke="#a3a9b3" stroke-width="1.9" stroke-linecap="round"/>
 <rect x="48.3" y="8.2" width="4.1" height="4.1" rx="0.6" fill="#a3a9b3"/>
 <rect x="54.2" y="8.2" width="4.1" height="4.1" rx="0.6" fill="#a3a9b3"/>
 <rect x="48.3" y="14.0" width="4.1" height="4.1" rx="0.6" fill="#a3a9b3"/>
 <rect x="54.2" y="14.0" width="4.1" height="4.1" rx="0.6" fill="#a3a9b3"/>
 <rect x="88" y="7.6" width="9.3" height="1.8" fill="#a3a9b3"/>
 <rect x="88" y="11.9" width="9.3" height="1.8" fill="#a3a9b3"/>
 <rect x="88" y="16.2" width="9.3" height="1.8" fill="#a3a9b3"/>
 <circle cx="132.6" cy="12.7" r="6.4" fill="#686d79"/>
 <path d="M130 10.1 L135.2 15.3 M135.2 10.1 L130 15.3" stroke="#363b48" stroke-width="1.7"/>
</svg>
<div class="abs" style="left:779px;top:83.5px;width:1px;height:12.5px;background:#31353f"></div>
<div class="abs" style="left:25px;top:139.5px;width:177px;height:3.6px;background:#32363f"></div>
<div class="abs" style="left:25px;top:143.1px;width:177px;height:28.7px;background:#5294e2"></div>
<div class="abs" style="left:25px;top:171.8px;width:177px;height:1.8px;background:#30343e"></div>
<div class="tx" style="left:58.00px;top:120.10px;font-size:13.70px;line-height:15.31px;color:#bcc2cc;font-weight:normal;">Recenti</div>
<div class="tx" style="left:58.00px;top:150.10px;font-size:13.70px;line-height:15.31px;color:#ffffff;font-weight:normal;">Home</div>
<div class="tx" style="left:58.00px;top:180.10px;font-size:13.70px;line-height:15.31px;color:#bcc2cc;font-weight:normal;">Documenti</div>
<div class="tx" style="left:58.00px;top:210.10px;font-size:13.70px;line-height:15.31px;color:#bcc2cc;font-weight:normal;">Immagini</div>
<div class="tx" style="left:58.00px;top:240.10px;font-size:13.70px;line-height:15.31px;color:#bcc2cc;font-weight:normal;">Musica</div>
<div class="tx" style="left:58.00px;top:270.10px;font-size:13.70px;line-height:15.31px;color:#bcc2cc;font-weight:normal;">Scaricati</div>
<div class="tx" style="left:58.00px;top:299.80px;font-size:13.70px;line-height:15.31px;color:#bcc2cc;font-weight:normal;">Video</div>
<div class="tx" style="left:58.00px;top:329.80px;font-size:13.70px;line-height:15.31px;color:#bcc2cc;font-weight:normal;">Cestino</div>
<div class="tx" style="left:58.00px;top:368.80px;font-size:13.70px;line-height:15.31px;color:#bcc2cc;font-weight:normal;">Altre posizioni</div>
<svg class="abs" style="left:30px;top:115px" width="26" height="275" viewBox="0 0 26 275">
 <circle cx="12.8" cy="11.8" r="6.3" stroke="#8e949f" stroke-width="1.4" fill="none"/>
 <path d="M10 10.6 L12.8 12.6 L16.4 9.4" stroke="#8e949f" stroke-width="1.3" fill="none"/>
 <path d="M5.6 42.3 L12.9 35.9 L20.2 42.3" stroke="#fff" stroke-width="2.2" fill="none" stroke-linejoin="round"/>
 <path d="M7.9 41 V47.6 H17.9 V41" stroke="#fff" stroke-width="2" fill="none"/>
 <path d="M11.5 47.6 V43.7 H14.3 V47.6" stroke="#fff" stroke-width="1.6" fill="none"/>
 <path d="M8 66.8 H14 L18.4 71.3 V78.9 H8Z" stroke="#a3a9b4" stroke-width="1.6" fill="none" stroke-linejoin="round"/>
 <path d="M13.6 67 V71.6 H18.2Z" fill="#a3a9b4"/>
 <path d="M6.5 100.6 H10 L11.5 98 H16.2 L17.7 100.6 H20 V108 H6.5Z" fill="#a3a9b4"/>
 <circle cx="12.9" cy="103.4" r="3.3" fill="#383c48"/>
 <circle cx="12.9" cy="103.4" r="1.8" fill="#a3a9b4"/>
 <path d="M10.2 136 V128.2 H18.6 V136" stroke="#a3a9b4" stroke-width="1.5" fill="none"/>
 <circle cx="8.6" cy="135.8" r="2.3" stroke="#a3a9b4" stroke-width="1.5" fill="none"/>
 <circle cx="17" cy="135.8" r="2.3" stroke="#a3a9b4" stroke-width="1.5" fill="none"/>
 <path d="M13 156.3 V163" stroke="#a3a9b4" stroke-width="1.6" stroke-dasharray="1.5 1.2"/>
 <path d="M8 163.3 L13 168.2 L18 163.3" stroke="#a3a9b4" stroke-width="1.7" fill="none"/>
 <path d="M6.3 188.8 L9.8 191 V193 L6.3 195.2Z" fill="#a3a9b4"/>
 <rect x="10.5" y="189" width="9.3" height="8" rx="0.6" fill="#a3a9b4"/>
 <path d="M7 216.3 H19" stroke="#a3a9b4" stroke-width="1.6"/>
 <path d="M9.5 215 Q9.5 213.6 11 213.6 H15 Q16.5 213.6 16.5 215" stroke="#a3a9b4" stroke-width="1.3" fill="none"/>
 <path d="M7.6 218.3 Q7 223 8.2 227.6 Q8.6 229 10 229 H16 Q17.4 229 17.8 227.6 Q19 223 18.4 218.3" stroke="#a3a9b4" stroke-width="1.5" fill="none"/>
 <path d="M10.6 220 Q10.2 223.5 10.8 226.6 M13 220 V226.8 M15.4 220 Q15.8 223.5 15.2 226.6" stroke="#a3a9b4" stroke-width="1" fill="none"/>
 <path d="M13 255.8 V266.2 M7.8 261 H18.2" stroke="#a3a9b4" stroke-width="1.6"/>
</svg>
<div class="tx" style="left:250.00px;top:130.78px;font-size:3.45px;line-height:3.85px;color:#3a3a3a;font-weight:bold;">Beej&#x27;s Guide to Network Programming</div>
<div class="tx" style="left:250.00px;top:136.27px;font-size:2.90px;line-height:3.24px;color:#3a3a3a;font-weight:bold;">Using Internet Sockets</div>
<div class="tx" style="left:250.00px;top:142.42px;font-size:1.75px;line-height:1.96px;color:#555;font-weight:normal;">Brian &quot;Beej Jorgensen&quot; Hall</div>
<div class="tx" style="left:250.00px;top:144.66px;font-size:1.70px;line-height:1.90px;color:#555;font-weight:normal;">beej@beej.us</div>
<div class="tx" style="left:250.00px;top:147.99px;font-size:1.45px;line-height:1.62px;color:#666;font-weight:normal;">Version 3.0.21</div>
<div class="tx" style="left:250.00px;top:149.79px;font-size:1.45px;line-height:1.62px;color:#666;font-weight:normal;">June 8, 2016</div>
<div class="tx" style="left:250.00px;top:152.60px;font-size:1.55px;line-height:1.73px;color:#888;font-weight:normal;">Copyright (c) 2016 Brian Beej Hall</div>
<div class="abs" style="left:241.3px;top:243px;width:84.5px;height:16.5px;border:1px dotted #9aa0a8;box-sizing:border-box"></div>
<svg width="0" height="0" style="position:absolute">
<defs>
 <linearGradient id="fg" x1="0" y1="0" x2="0" y2="1"><stop offset="0" stop-color="#ebdec6"/><stop offset="1" stop-color="#e1cfb2"/></linearGradient>
 <linearGradient id="bgd" x1="0" y1="0" x2="0" y2="1"><stop offset="0" stop-color="#c7b18b"/><stop offset="1" stop-color="#bca782"/></linearGradient>
 <symbol id="fd" viewBox="0 0 76 68">
  <rect x="0.3" y="62.5" width="75.4" height="3.6" rx="1.8" fill="#000" opacity="0.13"/>
  <path d="M4.6 0 H29.8 Q30.8 0 31.5 0.7 L37.5 7 H71 Q72.6 7 72.6 8.6 V40 H3 V1.6 Q3 0 4.6 0Z" fill="url(#bgd)"/>
  <path d="M1.4 18.5 H22 L27.6 11.5 H73.6 Q75 11.5 75 12.9 V62.6 Q75 64.6 73 64.6 H2 Q0 64.6 0 62.6 V19.9 Q0 18.5 1.4 18.5Z" fill="url(#fg)"/>
  <path d="M0.2 63.6 Q0.6 64.6 2 64.6 H73 Q74.4 64.6 74.8 63.6" stroke="#bfa985" stroke-width="1.1" fill="none"/>
  <path d="M1.4 19.1 H22.3 L27.9 12.1 H73.6" stroke="#f4ead8" stroke-width="0.9" fill="none" opacity="0.8"/>
 </symbol>
</defs></svg>
<svg class="abs" style="left:394.5px;top:159.5px" width="76" height="68" viewBox="0 0 76 68"><use href="#fd"/></svg>
<div class="tx" style="left:432.80px;top:243.88px;width:400px;margin-left:-200px;text-align:center;font-size:13.50px;line-height:15.08px;color:#62676f;font-weight:normal;">Code</div>
<svg class="abs" style="left:543.5px;top:159.5px" width="76" height="68" viewBox="0 0 76 68"><use href="#fd"/><path d="M28 31 H38.2 L42.3 35.1 V49.7 H28Z" stroke="#cab590" stroke-width="2.7" fill="none"/><path d="M37.5 30 V36 H43.5Z" fill="#cab590"/><path d="M32.5 25.3 H44 L49.5 30.8 V45.8" stroke="#cab590" stroke-width="2.7" fill="none"/></svg>
<div class="tx" style="left:581.80px;top:243.88px;width:400px;margin-left:-200px;text-align:center;font-size:13.50px;line-height:15.08px;color:#62676f;font-weight:normal;">Documenti</div>
<svg class="abs" style="left:692.5px;top:159.5px" width="76" height="68" viewBox="0 0 76 68"><use href="#fd"/><path d="M24 40 Q24 29.6 29.5 29.6 H31.6 L34 26.4 H44.8 L47.4 29.6 H49.8 Q56 29.6 56 40 Q56 49.8 51 49.8 H47.2 M31.8 49.8 H29 Q24 49.8 24 40Z" stroke="#cab590" stroke-width="2.5" fill="none" stroke-linejoin="round"/><circle cx="39.6" cy="40.6" r="9.2" stroke="#cab590" stroke-width="2.5" fill="none"/><circle cx="39.6" cy="40.6" r="4.6" stroke="#cab590" stroke-width="2.4" fill="none"/></svg>
<div class="tx" style="left:730.80px;top:243.88px;width:400px;margin-left:-200px;text-align:center;font-size:13.50px;line-height:15.08px;color:#62676f;font-weight:normal;">Immagini</div>
<svg class="abs" style="left:245.5px;top:283.2px" width="76" height="68" viewBox="0 0 76 68"><use href="#fd"/><path d="M28 25.2 H41.6 L48.6 32.2 V51.2 H45.6" stroke="#cab590" stroke-width="2.7" fill="none"/><path d="M41 24 V33 H50Z" fill="#cab590"/><path d="M28 24 V51.2" stroke="#cab590" stroke-width="2.7" stroke-dasharray="2.6 2.4" fill="none"/><path d="M28 51.2 H45" stroke="#cab590" stroke-width="2.7" stroke-dasharray="2.6 2.4" fill="none"/></svg>
<div class="tx" style="left:283.80px;top:367.58px;width:400px;margin-left:-200px;text-align:center;font-size:13.50px;line-height:15.08px;color:#62676f;font-weight:normal;">Modelli</div>
<svg class="abs" style="left:394.5px;top:283.2px" width="76" height="68" viewBox="0 0 76 68"><use href="#fd"/><path d="M33.5 45 V25.8 H50.5 V45" stroke="#cab590" stroke-width="2.7" fill="none"/><circle cx="28.4" cy="45" r="5.2" stroke="#cab590" stroke-width="2.7" fill="none"/><circle cx="45.3" cy="45" r="5.2" stroke="#cab590" stroke-width="2.7" fill="none"/></svg>
<div class="tx" style="left:432.80px;top:367.58px;width:400px;margin-left:-200px;text-align:center;font-size:13.50px;line-height:15.08px;color:#62676f;font-weight:normal;">Musica</div>
<svg class="abs" style="left:543.5px;top:283.2px" width="76" height="68" viewBox="0 0 76 68"><use href="#fd"/><circle cx="37.7" cy="44.6" r="4.1" stroke="#cab590" stroke-width="2.5" fill="none"/><path d="M33.6 38.2 L23.4 30.6 M22.2 37.4 V29.4 H30.4" stroke="#cab590" stroke-width="2.7" fill="none"/><path d="M41.8 38.2 L52.4 30.6 M45.2 29.4 H53.6 V37.4" stroke="#cab590" stroke-width="2.7" fill="none"/></svg>
<div class="tx" style="left:581.80px;top:367.58px;width:400px;margin-left:-200px;text-align:center;font-size:13.50px;line-height:15.08px;color:#62676f;font-weight:normal;">Pubblici</div>
<svg class="abs" style="left:692.5px;top:283.2px" width="76" height="68" viewBox="0 0 76 68"><use href="#fd"/><circle cx="38" cy="28" r="2.3" fill="#cab590"/><circle cx="38" cy="36.1" r="2.3" fill="#cab590"/><path d="M29.3 38.8 L38 47.6 L48.8 38.8" stroke="#cab590" stroke-width="3.3" fill="none"/></svg>
<div class="tx" style="left:730.80px;top:367.58px;width:400px;margin-left:-200px;text-align:center;font-size:13.50px;line-height:15.08px;color:#62676f;font-weight:normal;">Scaricati</div>
<svg class="abs" style="left:245.5px;top:407.0px" width="76" height="68" viewBox="0 0 76 68"><use href="#fd"/><path d="M32.4 33.8 H39 L43.2 38 V47.2 H32.4Z" stroke="#cab590" stroke-width="2.5" fill="none"/><path d="M38.6 33 V38.4 H44Z" fill="#cab590"/><path d="M22 26 H27 L22 31Z M56 26 H51 L56 31Z M22 52 H27 L22 47Z M56 52 H51 L56 47Z" fill="#cab590"/></svg>
<div class="tx" style="left:283.80px;top:491.38px;width:400px;margin-left:-200px;text-align:center;font-size:13.50px;line-height:15.08px;color:#62676f;font-weight:normal;">Scrivania</div>
<svg class="abs" style="left:394.5px;top:407.0px" width="76" height="68" viewBox="0 0 76 68"><use href="#fd"/><path d="M22.4 31.6 L30.2 39 L22.4 46.6Z" fill="#cab590"/><rect x="31.4" y="29.6" width="21.6" height="19" rx="2.6" fill="#cab590"/></svg>
<div class="tx" style="left:432.80px;top:491.38px;width:400px;margin-left:-200px;text-align:center;font-size:13.50px;line-height:15.08px;color:#62676f;font-weight:normal;">Video</div>
<div class="tx" style="left:283.50px;top:244.08px;width:400px;margin-left:-200px;text-align:center;font-size:13.50px;line-height:15.08px;color:#62676f;font-weight:normal;">bgnet_A4.pdf</div>
<div id="term">
  <div id="tt"><div class="ttl">Terminale</div>
    <div class="abs" style="left:517px;top:7px;width:14px;height:14px;border-radius:50%;background:#e65a5f"></div>
    <svg class="abs" style="left:520px;top:10px" width="8" height="8" viewBox="0 0 8 8"><path d="M1 1L7 7M7 1L1 7" stroke="#3a2a30" stroke-width="1.6"/></svg>
  </div>
  <div id="tc">
<div class="tr" style="top:0.000px"><span style="color:#ef2929">gsora</span><span class="n" style="color:#d3d7cf">@</span><span style="color:#729fcf">rDjentlemanPro</span><span class="n" style="color:#d3d7cf"> </span><span class="n" style="color:#c4a000">~</span><span class="n" style="color:#d3d7cf"> % screenfetch</span></div>
<div class="tr" style="top:13.125px"><span style="color:#ad7fa8">         -/oyddmdhs+:.</span></div>
<div class="tr" style="top:26.250px"><span style="color:#ad7fa8">     -o</span><span style="color:#eeeeec">dNMMMMMMMMNNmhy+</span><span style="color:#ad7fa8">-`</span><span style="color:#eeeeec">             </span><span style="color:#ad7fa8">gsora</span><span class="n" style="color:#d3d7cf">@</span><span style="color:#ad7fa8">rDjentlemanPro</span></div>
<div class="tr" style="top:39.375px"><span style="color:#ad7fa8">   -y</span><span style="color:#eeeeec">NMMMMMMMMMMMNNNmmdhy</span><span style="color:#ad7fa8">+-</span><span style="color:#eeeeec">           </span><span style="color:#ad7fa8">OS:</span><span class="n" style="color:#d3d7cf"> Gentoo 2.2</span></div>
<div class="tr" style="top:52.500px"><span style="color:#ad7fa8"> `o</span><span style="color:#eeeeec">mMMMMMMMMMMMMNmdmmmmddhhy</span><span style="color:#ad7fa8">/`</span><span style="color:#eeeeec">        </span><span style="color:#ad7fa8">Kernel:</span><span class="n" style="color:#d3d7cf"> x86_64 Linux 4.4.6-gentoo</span></div>
<div class="tr" style="top:65.625px"><span style="color:#ad7fa8"> om</span><span style="color:#eeeeec">MMMMMMMMMMMN</span><span style="color:#ad7fa8">hhyyyo</span><span style="color:#eeeeec">hmdddhhhd</span><span style="color:#ad7fa8">o`</span><span style="color:#eeeeec">      </span><span style="color:#ad7fa8">Uptime:</span><span class="n" style="color:#d3d7cf"> 7m</span></div>
<div class="tr" style="top:78.750px"><span style="color:#ad7fa8">.y</span><span style="color:#eeeeec">dMMMMMMMMMMd</span><span style="color:#ad7fa8">hs++so/s</span><span style="color:#eeeeec">mdddhhhhdm</span><span style="color:#ad7fa8">+`</span><span style="color:#eeeeec">    </span><span style="color:#ad7fa8">Packages:</span><span class="n" style="color:#d3d7cf"> 996</span></div>
<div class="tr" style="top:91.875px"><span style="color:#ad7fa8"> oy</span><span style="color:#eeeeec">hdmNMMMMMMMN</span><span style="color:#ad7fa8">dyooy</span><span style="color:#eeeeec">dmddddhhhhyhN</span><span style="color:#ad7fa8">d.</span><span style="color:#eeeeec">   </span><span style="color:#ad7fa8">Shell:</span><span class="n" style="color:#d3d7cf"> zsh 5.2</span></div>
<div class="tr" style="top:105.000px"><span style="color:#ad7fa8">  :o</span><span style="color:#eeeeec">yhhdNNMMMMMMMNNNmmdddhhhhhyym</span><span style="color:#ad7fa8">Mh</span><span style="color:#eeeeec">   </span><span style="color:#ad7fa8">Resolution:</span><span class="n" style="color:#d3d7cf"> 2560x1600</span></div>
<div class="tr" style="top:118.125px"><span style="color:#ad7fa8">    .:</span><span style="color:#eeeeec">+sydNMMMMMNNNmmmdddhhhhhhmM</span><span style="color:#ad7fa8">my</span><span style="color:#eeeeec">   </span><span style="color:#ad7fa8">DE:</span><span class="n" style="color:#d3d7cf"> Gnome 3.20.2</span></div>
<div class="tr" style="top:131.250px"><span style="color:#ad7fa8">       /m</span><span style="color:#eeeeec">MMMMMMNNNmmmdddhhhhhmMNh</span><span style="color:#ad7fa8">s:</span><span style="color:#eeeeec">   </span><span style="color:#ad7fa8">WM:</span><span class="n" style="color:#d3d7cf"> GNOME Shell</span></div>
<div class="tr" style="top:144.375px"><span style="color:#ad7fa8">    `o</span><span style="color:#eeeeec">NMMMMMMMNNNmmmddddhhdmMNhs</span><span style="color:#ad7fa8">+`</span><span style="color:#eeeeec">    </span><span style="color:#ad7fa8">WM Theme:</span><span class="n" style="color:#d3d7cf"> Not Found</span></div>
<div class="tr" style="top:157.500px"><span style="color:#ad7fa8">  `s</span><span style="color:#eeeeec">NMMMMMMMMNNNmmmdddddmNMmhs</span><span style="color:#ad7fa8">/.</span><span style="color:#eeeeec">      </span><span style="color:#ad7fa8">GTK2 Theme:</span><span class="n" style="color:#d3d7cf"> Arc-Darker</span></div>
<div class="tr" style="top:170.625px"><span style="color:#ad7fa8"> /N</span><span style="color:#eeeeec">MMMMMMMMNNNNmmmdddmNMNdso</span><span style="color:#ad7fa8">:`</span><span style="color:#eeeeec">        </span><span style="color:#ad7fa8">GTK3 Theme:</span><span class="n" style="color:#d3d7cf"> Arc-Darker</span></div>
<div class="tr" style="top:183.750px"><span style="color:#ad7fa8">+M</span><span style="color:#eeeeec">MMMMMMNNNNNmmmmdmNMNdso</span><span style="color:#ad7fa8">/-</span><span style="color:#eeeeec">           </span><span style="color:#ad7fa8">Icon Theme:</span><span class="n" style="color:#d3d7cf"> Adwaita</span></div>
<div class="tr" style="top:196.875px"><span style="color:#eeeeec">MNNNNNNNmmmmmNNMmhs+/</span><span style="color:#ad7fa8">-`</span><span style="color:#eeeeec">               </span><span style="color:#ad7fa8">Font:</span><span class="n" style="color:#d3d7cf"> Cantarell 11</span></div>
<div class="tr" style="top:210.000px"><span style="color:#ad7fa8">/h</span><span style="color:#eeeeec">MMNNNNNNNNMNdhs++/</span><span style="color:#ad7fa8">-`</span><span style="color:#eeeeec">                </span><span style="color:#ad7fa8">CPU:</span><span class="n" style="color:#d3d7cf"> Intel Core i5-4258U CPU @ 2.40GHz</span></div>
<div class="tr" style="top:223.125px"><span style="color:#ad7fa8">`/</span><span style="color:#eeeeec">ohdmmddhys+++/:</span><span style="color:#ad7fa8">.`</span><span style="color:#eeeeec">                   </span><span style="color:#ad7fa8">RAM:</span><span class="n" style="color:#d3d7cf"> 655MB / 7891MB</span></div>
<div class="tr" style="top:236.250px"><span style="color:#ad7fa8">  `-//////:--.</span></div>
<div class="tr" style="top:249.375px"><span style="color:#ef2929">gsora</span><span class="n" style="color:#d3d7cf">@</span><span style="color:#729fcf">rDjentlemanPro</span><span class="n" style="color:#d3d7cf"> </span><span class="n" style="color:#c4a000">~</span><span class="n" style="color:#d3d7cf"> % </span></div>
    <div class="abs" style="left:164px;top:249.5px;width:6px;height:12px;border:1px solid #d3d7cf"></div>
    <div id="sb">
      <div class="seg" style="left:0;width:72.19px;background:#303030"><span style="color:#a06a6a"> 0</span><span style="color:#b8b8b8"> weechat</span></div>
      <div class="seg" style="left:78.75px;width:65.63px;background:#303030"><span style="color:#a06a6a"> 1</span><span style="color:#b8b8b8"> links</span><span style="color:#707070">-</span></div>
      <div class="seg" style="left:150.94px;width:52.5px;background:#4a4a4a"><span style="color:#4aa8d8;font-weight:bold"> 2</span><span style="color:#a0a0a0">:</span><span style="color:#eeeeec;font-weight:bold">zsh</span><span style="color:#34e2e2;font-weight:bold">*</span></div>
      <div class="seg" style="left:413.44px;width:45.94px;background:#6e6e6e;color:#1c1c1c;font-weight:bold"> 27/08</div>
      <div class="seg" style="left:459.38px;width:65.63px;background:#9a9a9a;color:#1c1c1c;font-weight:bold"> 23:48:08</div>
    </div>
  </div>
  <div class="abs" style="left:528px;top:27px;width:11px;height:317px;background:#fafafa"></div>
  <div class="abs" style="left:530.5px;top:30.5px;width:5.5px;height:310px;background:#bfc1c8;border-radius:3px"></div>
</div>

</body></html>
